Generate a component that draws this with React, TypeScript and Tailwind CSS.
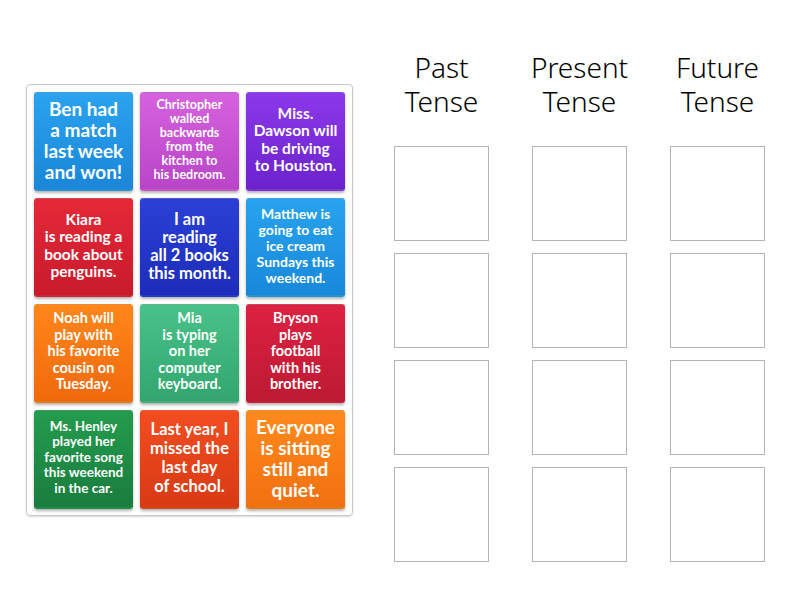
import React from "react";

type Card = { lines: string[]; cls: string; text: string };

const cards: Card[] = [
  { lines: ["Ben had", "a match", "last week", "and won!"], cls: "from-[#2aa3ef] to-[#1a86d8]", text: "text-[19px] leading-[21px]" },
  { lines: ["Christopher", "walked", "backwards", "from the", "kitchen to", "his bedroom."], cls: "from-[#d762df] to-[#b844c8]", text: "text-[12.5px] leading-[14px]" },
  { lines: ["Miss.", "Dawson will", "be driving", "to Houston."], cls: "from-[#8c38ea] to-[#6b22cc]", text: "text-[15.5px] leading-[17.5px]" },
  { lines: ["Kiara", "is reading a", "book about", "penguins."], cls: "from-[#e52838] to-[#c81b2c]", text: "text-[15.5px] leading-[17.5px]" },
  { lines: ["I am", "reading", "all 2 books", "this month."], cls: "from-[#2b40d6] to-[#1d2cba]", text: "text-[16.5px] leading-[18px]" },
  { lines: ["Matthew is", "going to eat", "ice cream", "Sundays this", "weekend."], cls: "from-[#28a3ef] to-[#1888da]", text: "text-[14px] leading-[16px]" },
  { lines: ["Noah will", "play with", "his favorite", "cousin on", "Tuesday."], cls: "from-[#ff861a] to-[#f06a0a]", text: "text-[14.5px] leading-[16.5px]" },
  { lines: ["Mia", "is typing", "on her", "computer", "keyboard."], cls: "from-[#48c28a] to-[#32a66e]", text: "text-[14.5px] leading-[16.5px]" },
  { lines: ["Bryson", "plays", "football", "with his", "brother."], cls: "from-[#de2142] to-[#bc1a34]", text: "text-[14.5px] leading-[16.5px]" },
  { lines: ["Ms. Henley", "played her", "favorite song", "this weekend", "in the car."], cls: "from-[#249c4e] to-[#1a7c3e]", text: "text-[13.5px] leading-[15.5px]" },
  { lines: ["Last year, I", "missed the", "last day", "of school."], cls: "from-[#f24d20] to-[#d83a14]", text: "text-[16.5px] leading-[19px]" },
  { lines: ["Everyone", "is sitting", "still and", "quiet."], cls: "from-[#ff8a1c] to-[#f27010]", text: "text-[19px] leading-[21px]" },
];

const headers = [
  ["Past", "Tense"],
  ["Present", "Tense"],
  ["Future", "Tense"],
];

export default function App() {
  return (
    <div
      className="w-[800px] h-[600px] bg-white flex"
      style={{ fontFamily: "Lato, 'Noto Sans', sans-serif" }}
    >
      <div className="ml-[26px] mt-[84px] w-[327px] h-[432px] border border-[#c8c8c8] rounded-[4px] shadow-[0_1px_2px_rgba(0,0,0,0.15)] pl-[7px] pt-[7px]">
        <div className="grid grid-cols-[99px_99px_99px] grid-rows-[99px_99px_99px_99px] gap-[7px]">
          {cards.map((c, i) => (
            <div
              key={i}
              className={`rounded-[3px] bg-gradient-to-b ${c.cls} shadow-[0_2px_3px_rgba(0,0,0,0.3)] border-t border-white/20 border-b-2 border-b-black/10 flex items-center justify-center text-center text-white font-bold pb-[3px] ${c.text}`}
            >
              <div>
                {c.lines.map((l, j) => (
                  <React.Fragment key={j}>
                    {j > 0 && <br />}
                    {l}
                  </React.Fragment>
                ))}
              </div>
            </div>
          ))}
        </div>
      </div>
      <div className="ml-[41px] mt-[50px] grid grid-cols-[95px_95px_95px] gap-x-[43px]">
        {headers.map((h, i) => (
          <div key={i} className="flex flex-col items-center">
            <div
              className="text-[28px] leading-[34px] font-light text-black text-center whitespace-nowrap"
              style={{ fontFamily: "'Noto Sans', Lato, sans-serif" }}
            >
              {h[0]}
              <br />
              {h[1]}
            </div>
            <div className="mt-[28px] flex flex-col gap-[12px]">
              {[0, 1, 2, 3].map((k) => (
                <div key={k} className="w-[95px] h-[95px] border border-[#b4b4b4]" />
              ))}
            </div>
          </div>
        ))}
      </div>
    </div>
  );
}
